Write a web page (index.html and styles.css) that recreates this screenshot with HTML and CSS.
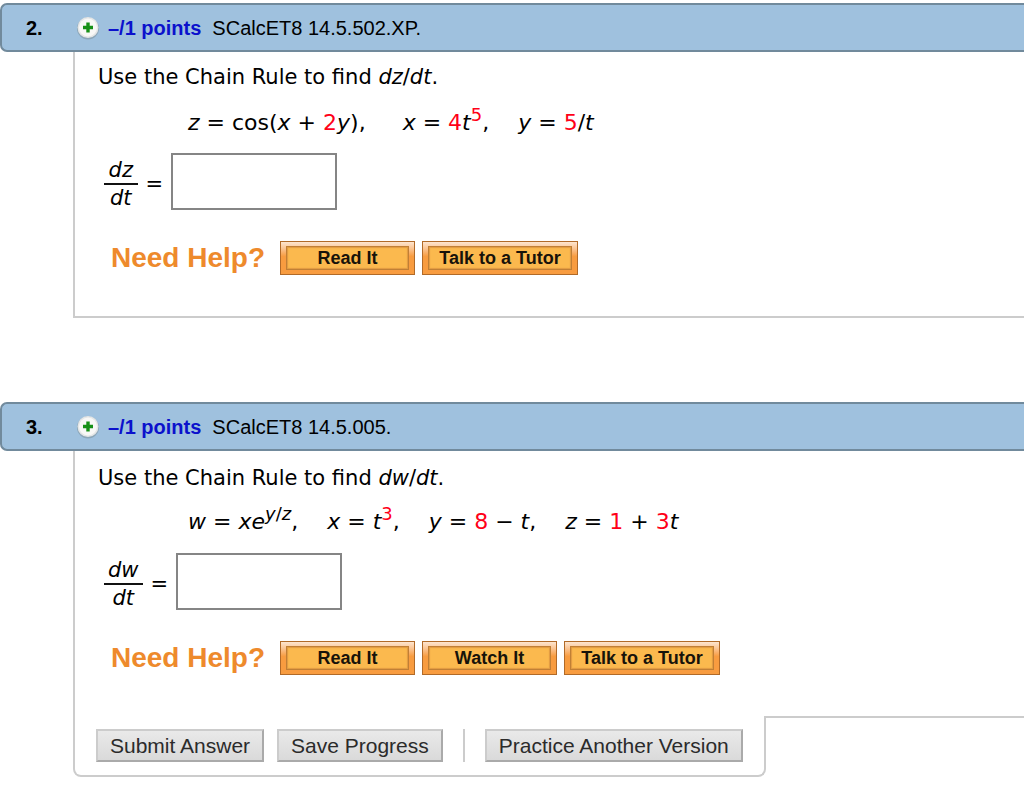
FILE: index.html
```html
<!DOCTYPE html>
<html lang="en">
<head>
<meta charset="utf-8">
<title>Chain Rule Homework</title>
<link rel="stylesheet" href="styles.css">
</head>
<body>
<main>
  <section class="question">
    <header class="bar">
      <span class="number">2.</span>
      <button class="expand" type="button" aria-label="Show details">
        <svg viewBox="0 0 24 24" width="24" height="24"><circle cx="12" cy="12.500" r="11" fill="#8ba6b8"/><circle cx="12" cy="11.500" r="10.500" fill="#e4e6e6"/><circle cx="12" cy="11.500" r="9" fill="#f8f8f6"/><path d="M10.300 6.500h3.400v3.300H17v3.400h-3.300v3.300h-3.400v-3.300H7V9.800h3.300z" fill="#169016"/></svg>
      </button>
      <a class="points" href="#points2">–/1 points</a>
      <span class="code">SCalcET8 14.5.502.XP.</span>
    </header>
    <div class="body">
      <p class="prompt">Use the Chain Rule to find <i>dz</i>/<i>dt</i>.</p>
      <div class="equations">
        <span class="wide"><i>z</i> = cos(<i>x</i> + <b>2</b><i>y</i>),</span>
        <span><i>x</i> = <b>4</b><i>t</i><sup><b>5</b></sup>,</span>
        <span><i>y</i> = <b>5</b>/<i>t</i></span>
      </div>
      <div class="answer">
        <label class="derivative" for="answer2"><span class="fraction"><i class="over">dz</i><i class="under">dt</i></span><span>=</span></label>
        <input id="answer2" type="text">
      </div>
      <div class="help">
        <span class="help-label">Need Help?</span>
        <button class="help-button" type="button"><span>Read It</span></button>
        <button class="help-button tutor" type="button"><span>Talk to a Tutor</span></button>
      </div>
    </div>
  </section>

  <section class="question">
    <header class="bar">
      <span class="number">3.</span>
      <button class="expand" type="button" aria-label="Show details">
        <svg viewBox="0 0 24 24" width="24" height="24"><circle cx="12" cy="12.500" r="11" fill="#8ba6b8"/><circle cx="12" cy="11.500" r="10.500" fill="#e4e6e6"/><circle cx="12" cy="11.500" r="9" fill="#f8f8f6"/><path d="M10.300 6.500h3.400v3.300H17v3.400h-3.300v3.300h-3.400v-3.300H7V9.800h3.300z" fill="#169016"/></svg>
      </button>
      <a class="points" href="#points3">–/1 points</a>
      <span class="code">SCalcET8 14.5.005.</span>
    </header>
    <div class="body open">
      <p class="prompt">Use the Chain Rule to find <i>dw</i>/<i>dt</i>.</p>
      <div class="equations">
        <span><i>w</i> = <i>xe</i><sup><i>y</i>/<i>z</i></sup>,</span>
        <span><i>x</i> = <i>t</i><sup><b>3</b></sup>,</span>
        <span><i>y</i> = <b>8</b> − <i>t</i>,</span>
        <span><i>z</i> = <b>1</b> + <b>3</b><i>t</i></span>
      </div>
      <div class="answer">
        <label class="derivative" for="answer3"><span class="fraction"><i class="over">dw</i><i class="under">dt</i></span><span>=</span></label>
        <input id="answer3" type="text">
      </div>
      <div class="help">
        <span class="help-label">Need Help?</span>
        <button class="help-button" type="button"><span>Read It</span></button>
        <button class="help-button" type="button"><span>Watch It</span></button>
        <button class="help-button tutor" type="button"><span>Talk to a Tutor</span></button>
      </div>
    </div>
    <footer class="footer">
      <div class="actions">
        <button class="action" type="button">Submit Answer</button>
        <button class="action" type="button">Save Progress</button>
        <span class="divider"></span>
        <button class="action" type="button">Practice Another Version</button>
      </div>
      <div class="edge"></div>
    </footer>
  </section>
</main>
</body>
</html>
```
FILE: styles.css
```css
* { box-sizing: border-box; }
body {
  margin: 0;
  padding-top: 3px;
  background: #fff;
  color: #000;
  font-family: Verdana, "DejaVu Sans", sans-serif;
  font-size: 21px;
  line-height: 28px;
  overflow-x: hidden;
}
button { font-family: Arial, "Liberation Sans", sans-serif; }
.question { margin-bottom: 84px; }
.question:last-child { margin-bottom: 0; }
.bar {
  display: flex;
  align-items: center;
  height: 49px;
  padding-left: 24px;
  border: 2px solid #718a9c;
  border-right: 0;
  border-radius: 7px 0 0 7px;
  background: #9fc1de;
  font-family: Arial, "Liberation Sans", sans-serif;
  font-size: 20px;
}
.number { width: 50px; font-weight: bold; }
.expand {
  display: flex;
  width: 24px;
  height: 24px;
  padding: 0;
  border: 0;
  background: none;
}
.points {
  margin: 0 11px 0 8px;
  color: #0b11cc;
  font-weight: bold;
  text-decoration: none;
}
.body {
  margin-left: 73px;
  padding: 11px 20px 41px 23px;
  border-left: 2px solid #ccc;
  border-bottom: 2px solid #ccc;
}
.body.open { padding-top: 13px; border-bottom: 0; }
.prompt { margin: 0; }
.equations {
  display: flex;
  gap: 29px;
  margin: 18px 0 15px 90px;
  font-size: 22px;
}
.open .equations { margin: 16px 0; margin-left: 90px; }
.wide { margin-right: 8px; }
b { color: #ff0018; font-weight: normal; }
sup { font-size: 18px; line-height: 0; vertical-align: 9px; }
.answer { display: flex; align-items: center; }
.derivative {
  display: flex;
  align-items: center;
  gap: 8px;
  margin: 5px 8px 0 6px;
}
.fraction { display: grid; text-align: center; line-height: 26px; }
.over { padding: 0 4px; }
.under { padding: 0 6px; border-top: 2px solid #111; }
.answer input {
  width: 166px;
  height: 57px;
  padding: 0 8px;
  border: 2px solid #858585;
  background: #fff;
  font: inherit;
}
.help {
  display: flex;
  align-items: center;
  gap: 7px;
  margin-top: 30px;
  padding-left: 13px;
}
.help-label {
  width: 162px;
  color: #ee8a2c;
  font-family: Arial, "Liberation Sans", sans-serif;
  font-size: 28px;
  font-weight: bold;
}
.help-button {
  display: flex;
  width: 135px;
  height: 34px;
  padding: 4px 5px;
  border: 1px solid #b16a28;
  background: linear-gradient(#fde5cf, #fbc594 20%, #f89c40 45%, #f89c40);
  color: #17130a;
  font-size: 18px;
  font-weight: bold;
}
.help-button.tutor { width: 156px; }
.help-button span {
  flex: 1;
  border: 1px solid #c07f35;
  box-shadow: inset 0 0 1px 1px #e09a42;
  background: #fbb94e;
  line-height: 23px;
  white-space: nowrap;
}
.footer { display: flex; margin-left: 73px; }
.actions {
  display: flex;
  gap: 13px;
  padding: 13px 21px;
  border: 2px solid #ccc;
  border-top: 0;
  border-radius: 0 0 8px 8px;
}
.divider { width: 2px; margin: 0 7px; background: #ccc; }
.action {
  height: 33px;
  padding: 0 12px;
  border: 2px solid;
  border-color: #ccc #aaa #aaa #ccc;
  background: linear-gradient(#e9e9e9, #dadada);
  color: #2b2b2b;
  font-size: 21px;
  line-height: 27px;
}
.edge { flex: 1; border-top: 2px solid #ccc; }
```
